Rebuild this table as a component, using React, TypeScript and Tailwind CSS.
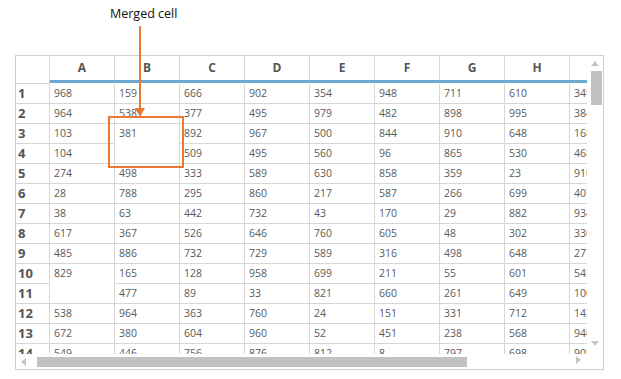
const cols = ["A", "B", "C", "D", "E", "F", "G", "H", "I"];

// null = covered by a merged cell above it
const rows: (string | null)[][] = [
  ["968", "159", "666", "902", "354", "948", "711", "610", "349"],
  ["964", "538", "377", "495", "979", "482", "898", "995", "384"],
  ["103", "381", "892", "967", "500", "844", "910", "648", "168"],
  ["104", null, "509", "495", "560", "96", "865", "530", "468"],
  ["274", "498", "333", "589", "630", "858", "359", "23", "910"],
  ["28", "788", "295", "860", "217", "587", "266", "699", "407"],
  ["38", "63", "442", "732", "43", "170", "29", "882", "934"],
  ["617", "367", "526", "646", "760", "605", "48", "302", "330"],
  ["485", "886", "732", "729", "589", "316", "498", "648", "277"],
  ["829", "165", "128", "958", "699", "211", "55", "601", "545"],
  [null, "477", "89", "33", "821", "660", "261", "649", "100"],
  ["538", "964", "363", "760", "24", "151", "331", "712", "143"],
  ["672", "380", "604", "960", "52", "451", "238", "568", "940"],
  ["549", "446", "756", "876", "812", "8", "797", "698", "908"],
];

// merged blocks: key "row-col" -> spans two rows
const merged = new Set(["2-1", "9-0"]);

function Grid() {
  const cells: React.ReactNode[] = [];
  rows.forEach((row, r) => {
    cells.push(
      <div
        key={`h${r}`}
        className="flex h-[20px] items-center border-b border-r border-[#d6d6d6] pl-[2px] text-[13px] font-bold text-[#555]"
        style={{ gridRow: r + 1, gridColumn: 1 }}
      >
        {r + 1}
      </div>,
    );
    row.forEach((v, c) => {
      if (v === null) return;
      const span = merged.has(`${r}-${c}`);
      cells.push(
        <div
          key={`${r}-${c}`}
          className="flex items-start border-b border-r border-[#d6d6d6] pl-[4px] pt-[2px] text-[10.5px] text-[#5a5a5a]"
          style={{
            gridColumn: c + 2,
            gridRow: span ? `${r + 1} / span 2` : r + 1,
          }}
        >
          {v}
        </div>
      );
    });
  });
  return (
    <div className="grid grid-cols-[34px_repeat(9,65px)] auto-rows-[20px]">
      {cells}
    </div>
  );
}

function Triangle({ dir, className }: { dir: "up" | "down" | "left" | "right"; className: string }) {
  const pts = {
    up: "0,5 4,0 8,5",
    down: "0,0 8,0 4,5",
    left: "5,0 5,8 0,4",
    right: "0,0 0,8 5,4",
  }[dir];
  const vertical = dir === "up" || dir === "down";
  return (
    <svg
      width={vertical ? 8 : 5}
      height={vertical ? 5 : 8}
      className={className}
    >
      <polygon points={pts} fill="#c6c6c6" />
    </svg>
  );
}

export default function App() {
  return (
    <div
      className="relative h-[379px] w-[621px] overflow-hidden bg-white pl-[15px] pt-[55px]"
      style={{ fontFamily: '"Open Sans", "DejaVu Sans", sans-serif' }}
    >
      <div className="flex w-[589px] flex-col border border-[#cfcfcf]">
        <div className="flex">
          {/* viewport */}
          <div className="h-[298px] w-[571px] overflow-hidden">
            <div className="flex h-[24px] w-max">
              <div className="w-[34px] border-r border-[#d6d6d6]" />
              {cols.map((c) => (
                <div
                  key={c}
                  className="flex w-[65px] shrink-0 items-center justify-center border-r border-[#d6d6d6] text-[12px] font-bold text-[#555]"
                >
                  {c}
                </div>
              ))}
            </div>
            <div className="flex h-[3px] w-max">
              <div className="w-[34px] border-r border-[#d6d6d6]" />
              <div className="h-[3px] w-[585px] bg-[#6ca7d2]" />
            </div>
            <div className="h-px w-[34px] bg-[#d6d6d6]" />
            <Grid />
          </div>
          {/* vertical scrollbar */}
          <div className="flex h-[298px] w-[16px] flex-col items-center">
            <Triangle dir="up" className="mt-[5px]" />
            <div className="ml-[3px] mt-[5px] h-[34px] w-[11px] bg-[#c2c2c2]" />
            <div className="flex-1" />
            <Triangle dir="down" className="mb-[8px]" />
          </div>
        </div>
        {/* horizontal scrollbar */}
        <div className="flex h-[15px] w-[571px] items-center">
          <Triangle dir="left" className="ml-[5px]" />
          <div className="ml-[11px] h-[10px] w-[430px] bg-[#c2c2c2]" />
          <div className="flex-1" />
          <Triangle dir="right" className="mb-[4px] mr-[6px]" />
        </div>
      </div>

      {/* annotation */}
      <div className="absolute left-[110px] top-[5px] text-[12.5px] text-[#111]">
        Merged cell
      </div>
      <svg className="absolute left-[132px] top-[26px]" width="16" height="92">
        <line x1="8" y1="0" x2="8" y2="84" stroke="#e8792f" strokeWidth="2" />
        <polygon points="3,82 13,82 8,91" fill="#e8792f" />
      </svg>
      <div className="absolute left-[108px] top-[116px] h-[52px] w-[76px] border-2 border-[#e8792f]" />
    </div>
  );
}
